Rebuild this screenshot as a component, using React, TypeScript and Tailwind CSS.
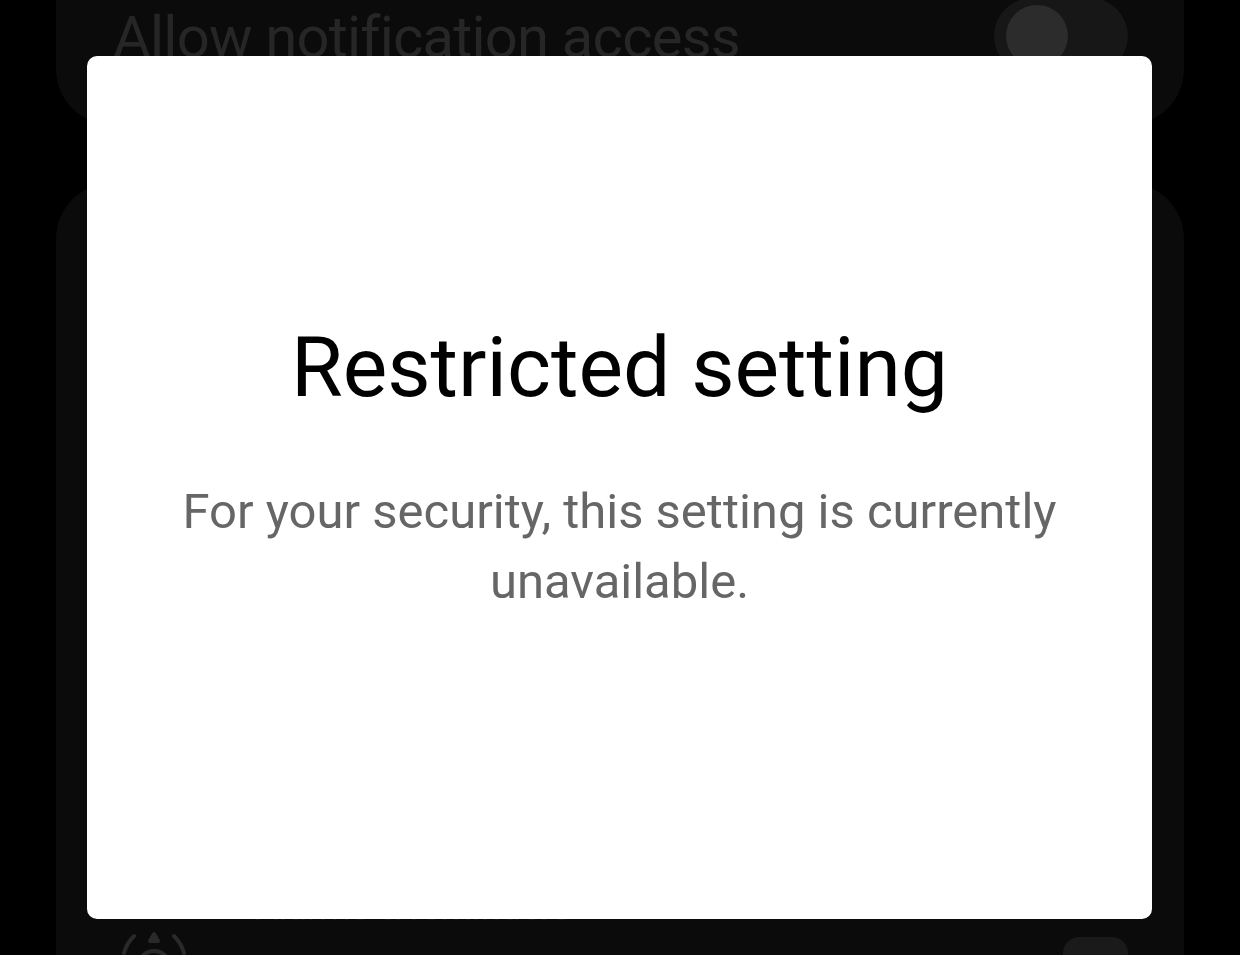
import React from 'react';

const font = { fontFamily: 'Roboto, "Noto Sans", sans-serif' };

const App: React.FC = () => {
  return (
    <div className="relative h-[955px] w-[1240px] overflow-hidden bg-black" style={font}>
      {/* dimmed settings page behind the dialog */}
      <div className="flex flex-col px-[56px]">
        <div className="-mt-[70px] flex h-[195px] items-start justify-between rounded-[56px] bg-[#0b0b0b] pl-[57px] pr-[56px] pt-[68px]">
          <span className="mt-[7px] text-[58px] leading-[64px] tracking-[-0.8px] text-[#262626]">Allow notification access</span>
          <div className="flex h-[76px] w-[134px] items-center rounded-full bg-[#171717] px-[12px]">
            <div className="h-[62px] w-[62px] rounded-full bg-[#2c2c2c]" />
          </div>
        </div>

        <div className="mt-[58px] flex h-[900px] flex-col rounded-[56px] bg-[#0b0b0b] px-[64px] pt-[703px]">
          <div className="flex flex-col">
            <span className="ml-[135px] text-[36px] leading-[44px] text-[#1c1c1c]">Alarms &amp; reminders</span>
            <div className="-mt-[1px] flex">
              <svg width="68" height="68" viewBox="0 0 68 68" fill="none" stroke="#292929" strokeWidth="4" strokeLinecap="round">
                <path d="M4 24 A38 38 0 0 1 14 7" />
                <path d="M54 7 A38 38 0 0 1 64 24" />
                <path d="M30 12 L34 5 L38 12 Z" fill="#292929" strokeLinejoin="round" />
                <circle cx="34" cy="38" r="16" />
              </svg>
            </div>
          </div>
        </div>
      </div>

      <div className="absolute right-[112px] top-[937px] h-[60px] w-[65px] rounded-[16px] bg-[#1a1a1a]" />

      {/* dialog */}
      <div className="absolute left-[87px] top-[56px] flex h-[863px] w-[1065px] flex-col items-center rounded-[10px] bg-white pt-[267px]">
        <h2 className="text-[84px] leading-[90px] text-black">Restricted setting</h2>
        <p className="mt-[64px] w-[900px] text-center text-[49px] leading-[70px] text-[#666666]">
          For your security, this setting is currently unavailable.
        </p>
      </div>
    </div>
  );
};

export default App;
